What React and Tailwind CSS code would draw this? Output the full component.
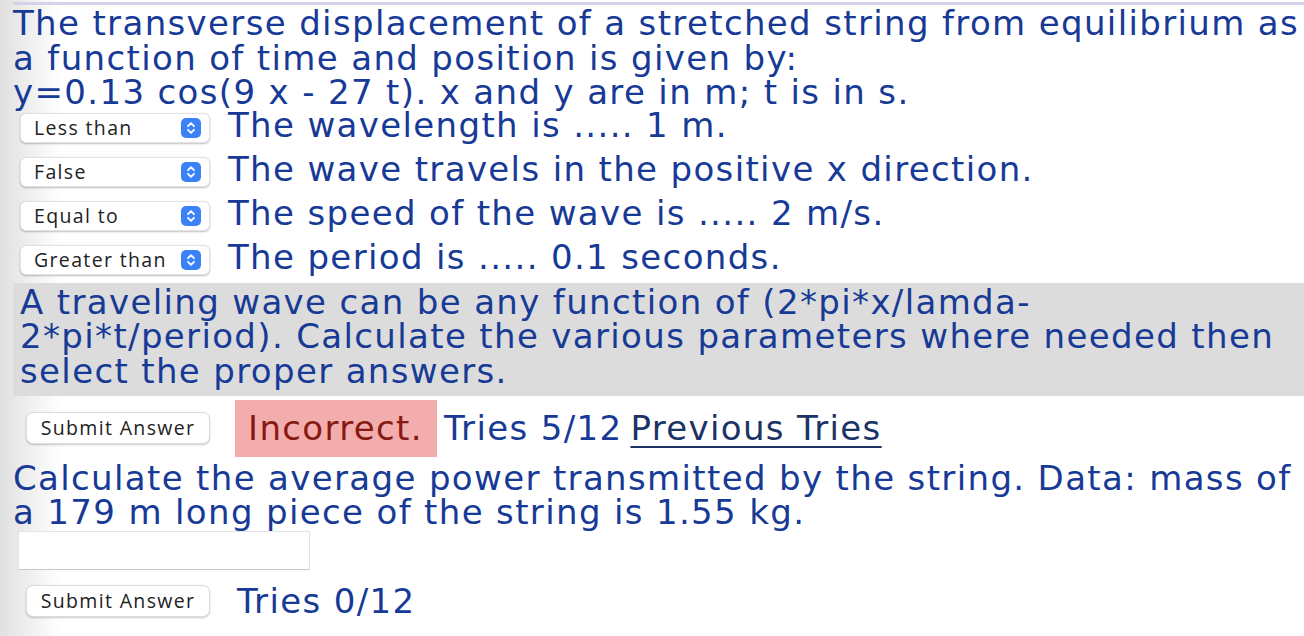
import React from 'react';

const font = { fontFamily: '"DejaVu Sans", Verdana, sans-serif' };
const ui = { fontFamily: '"Open Sans", "Liberation Sans", Arial, sans-serif' };

const FakeSelect = ({ value }) => (
    <div className="w-[190px] h-[30px] shrink-0 flex items-center justify-between pl-[13px] pr-[8px] bg-white rounded-[6px] border border-[#e2e2e2] shadow-[0_1px_2px_rgba(0,0,0,0.25)]">
        <span className="text-[19.5px] leading-none text-[#222]" style={ui}>{value}</span>
        <span className="w-[20px] h-[20px] rounded-[5px] bg-[#3b82f6] flex items-center justify-center">
            <svg width="10" height="14" viewBox="0 0 10 14" fill="none" stroke="white" strokeWidth="1.8" strokeLinecap="round" strokeLinejoin="round">
                <path d="M2 5.2 L5 2.2 L8 5.2" />
                <path d="M2 8.8 L5 11.8 L8 8.8" />
            </svg>
        </span>
    </div>
);

const MacButton = ({ children }) => (
    <div className="w-[184px] h-[32px] shrink-0 flex items-center justify-center bg-white rounded-[7px] border border-[#dcdcdc] shadow-[0_1px_2px_rgba(0,0,0,0.22)] text-[19.5px] text-[#222]" style={ui}>
        {children}
    </div>
);

const rows = [
    ['Less than', 'The wavelength is ..... 1 m.'],
    ['False', 'The wave travels in the positive x direction.'],
    ['Equal to', 'The speed of the wave is ..... 2 m/s.'],
    ['Greater than', 'The period is ..... 0.1 seconds.'],
];

export default function App() {
    return (
        <div className="min-h-screen w-full overflow-hidden bg-[linear-gradient(to_right,#e0e0e0,#ffffff_60px)] text-[#173a96] tracking-[1.35px]" style={font}>
            <div className="pl-[13px] pt-[2px]">
                <div className="border-t-[3px] border-[#d2d3e8]"></div>

                {/* Question 1 */}
                <p className="text-[34px] leading-[34.5px] mt-[1px]">
                    The transverse displacement of a stretched string from equilibrium as<br />
                    a function of time and position is given by:<br />
                    y=0.13 cos(9 x - 27 t). x and y are in m; t is in s.
                </p>

                <div className="flex flex-col -mt-[4px]">
                    {rows.map(([sel, txt], i) => (
                        <div key={i} className="h-[44px] flex items-center pl-[7px] gap-[18px]">
                            <FakeSelect value={sel} />
                            <span className="text-[34px] leading-none -mt-[6px]">{txt}</span>
                        </div>
                    ))}
                </div>

                <div className="mt-[1px] bg-[#dcdcdc] h-[113px] pl-[7px] pt-[2px]">
                    <p className="text-[34px] leading-[34.5px]">
                        A traveling wave can be any function of (2*pi*x/lamda-<br />
                        2*pi*t/period). Calculate the various parameters where needed then<br />
                        select the proper answers.
                    </p>
                </div>

                <div className="flex items-center h-[57px] pl-[13px] mt-[4px]">
                    <MacButton>Submit Answer</MacButton>
                    <div className="ml-[25px] h-[57px] pl-[13px] pr-[14px] flex items-center bg-[#f4adad] text-[#861a12] text-[34px]">Incorrect.</div>
                    <span className="ml-[7px] text-[34px]">Tries 5/12</span>
                    <span className="ml-[8px] text-[34px] text-[#1c3366] underline underline-offset-[6px] decoration-[2px]">Previous Tries</span>
                </div>

                {/* Question 2 */}
                <p className="text-[34px] leading-[34.5px] mt-[4px]">
                    Calculate the average power transmitted by the string. Data: mass of<br />
                    a 179 m long piece of the string is 1.55 kg.
                </p>

                <div className="ml-[5px] mt-[1px] w-[292px] h-[39px] bg-white border border-[#e4e4e4] border-b-[#c8c8c8]"></div>

                <div className="flex items-center h-[33px] pl-[13px] mt-[15px]">
                    <MacButton>Submit Answer</MacButton>
                    <span className="ml-[27px] text-[34px]">Tries 0/12</span>
                </div>
            </div>
        </div>
    );
}
